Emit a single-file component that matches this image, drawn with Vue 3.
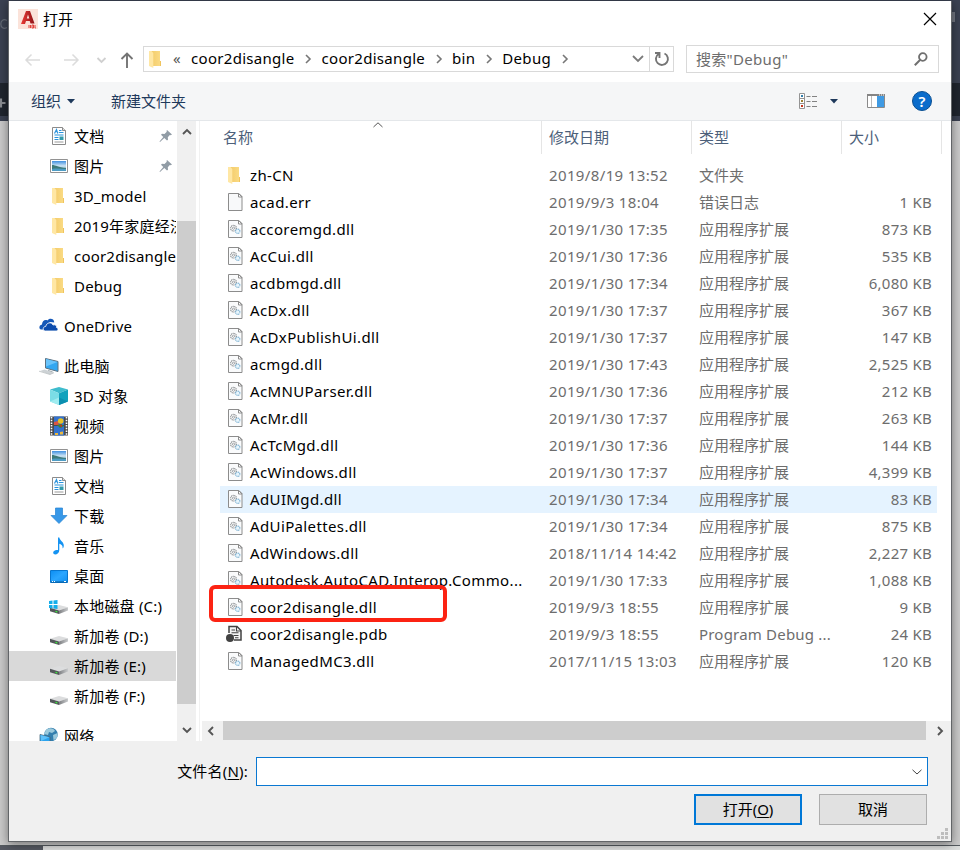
<script setup>
const crumbs = ['coor2disangle', 'coor2disangle', 'bin', 'Debug']

const groups = [
  [
    { icon: 'doc', label: '文档', pin: true },
    { icon: 'pic', label: '图片', pin: true },
    { icon: 'folder', label: '3D_model' },
    { icon: 'folder', label: '2019年家庭经济' },
    { icon: 'folder', label: 'coor2disangle' },
    { icon: 'folder', label: 'Debug' },
  ],
  [{ icon: 'cloud', label: 'OneDrive', root: true }],
  [
    { icon: 'pc', label: '此电脑', root: true },
    { icon: 'cube', label: '3D 对象' },
    { icon: 'video', label: '视频' },
    { icon: 'pic', label: '图片' },
    { icon: 'doc', label: '文档' },
    { icon: 'down', label: '下载' },
    { icon: 'music', label: '音乐' },
    { icon: 'desk', label: '桌面' },
    { icon: 'diskwin', label: '本地磁盘 (C:)' },
    { icon: 'disk', label: '新加卷 (D:)' },
    { icon: 'disk', label: '新加卷 (E:)', active: true },
    { icon: 'disk', label: '新加卷 (F:)' },
  ],
  [{ icon: 'net', label: '网络', root: true }],
]

const DLL = '应用程序扩展'
const files = [
  ['folder', 'zh-CN', '2019/8/19 13:52', '文件夹', ''],
  ['file', 'acad.err', '2019/9/3 18:04', '错误日志', '1 KB'],
  ['dll', 'accoremgd.dll', '2019/1/30 17:35', DLL, '873 KB'],
  ['dll', 'AcCui.dll', '2019/1/30 17:36', DLL, '535 KB'],
  ['dll', 'acdbmgd.dll', '2019/1/30 17:34', DLL, '6,080 KB'],
  ['dll', 'AcDx.dll', '2019/1/30 17:37', DLL, '367 KB'],
  ['dll', 'AcDxPublishUi.dll', '2019/1/30 17:37', DLL, '147 KB'],
  ['dll', 'acmgd.dll', '2019/1/30 17:43', DLL, '2,525 KB'],
  ['dll', 'AcMNUParser.dll', '2019/1/30 17:36', DLL, '212 KB'],
  ['dll', 'AcMr.dll', '2019/1/30 17:37', DLL, '263 KB'],
  ['dll', 'AcTcMgd.dll', '2019/1/30 17:36', DLL, '144 KB'],
  ['dll', 'AcWindows.dll', '2019/1/30 17:37', DLL, '4,399 KB'],
  ['dll', 'AdUIMgd.dll', '2019/1/30 17:34', DLL, '83 KB'],
  ['dll', 'AdUiPalettes.dll', '2019/1/30 17:34', DLL, '875 KB'],
  ['dll', 'AdWindows.dll', '2018/11/14 14:42', DLL, '2,227 KB'],
  ['dll', 'Autodesk.AutoCAD.Interop.Commo...', '2019/1/30 17:33', DLL, '1,088 KB'],
  ['dll', 'coor2disangle.dll', '2019/9/3 18:55', DLL, '9 KB'],
  ['pdb', 'coor2disangle.pdb', '2019/9/3 18:55', 'Program Debug ...', '24 KB'],
  ['dll', 'ManagedMC3.dll', '2017/11/15 13:03', DLL, '120 KB'],
]
const hovered = 'AdUIMgd.dll'
const marked = 'coor2disangle.dll'
</script>

<template>
  <div class="screen">
    <svg class="defs" width="0" height="0" aria-hidden="true">
      <defs>
        <linearGradient id="gFolder" x1="0" x2="1"><stop offset="0" stop-color="#f3cb6a" /><stop offset="1" stop-color="#fbdc86" /></linearGradient>
        <linearGradient id="gSky" x1="0" y1="0" x2="0" y2="1"><stop offset="0" stop-color="#3f8fe0" /><stop offset=".5" stop-color="#cfe6f5" /><stop offset="1" stop-color="#3e7f95" /></linearGradient>
        <linearGradient id="gDesk" x1="0" y1="0" x2="1" y2="1"><stop offset="0" stop-color="#0b8df2" /><stop offset=".5" stop-color="#2ba6ff" /><stop offset="1" stop-color="#118ff0" /></linearGradient>
        <linearGradient id="gDisk" x1="0" x2="1"><stop offset="0" stop-color="#7d7f82" /><stop offset="1" stop-color="#c9cbcd" /></linearGradient>
        <linearGradient id="gA" x1="0" x2="1"><stop offset="0" stop-color="#ea3a35" /><stop offset="1" stop-color="#8d1216" /></linearGradient>
      </defs>
      <symbol id="folder" viewBox="0 0 20 20">
        <path d="M5 2h9v11h1v4H5z" fill="url(#gFolder)" />
        <path d="M3 2h2.500l1.800 2v15L3 17z" fill="#ffe7a4" />
        <path d="M14 12h1v5h-1z" fill="#f0c45e" />
      </symbol>
      <symbol id="doc" viewBox="0 0 20 20">
        <path d="M3.500 1.500h10l3 3v14h-13z" fill="#fff" stroke="#8b8b8b" />
        <path d="M13.500 1.500v3h3" fill="#ddd" stroke="#8b8b8b" />
        <path d="M5.500 7.500l2-4 1.200 4M10 4.500h2.500M9.800 6.500h4.700M5.500 9h9M5.500 11.500h4M5.500 13.500h4" fill="none" stroke="#2b93dc" stroke-width="1.200" />
        <path d="M5.500 16h9" stroke="#999" />
        <path d="M10.500 10.500h4v3.500h-4z" fill="#39a" />
      </symbol>
      <symbol id="pic" viewBox="0 0 20 20">
        <path d="M1.500 3.500h17v13h-17z" fill="#fff" stroke="#929292" />
        <path d="M3 5h14v10H3z" fill="url(#gSky)" />
        <path d="M3 9c4 0 6 2.500 14 3v3H3z" fill="#3d7a7a" />
        <path d="M3 13c5-1 9 0 14 0v2H3z" fill="#4d9cc4" />
      </symbol>
      <symbol id="cloud" viewBox="0 0 20 20">
        <path d="M2 13.500C-.5 13 0 9 3 8.500 3 5 6 3 8.500 4.500 10 2 15 2 15.300 6.500L11 6 7 10v3.500z" fill="#1558b8" />
        <path d="M6.500 15c-3.200-.3-2.900-4.500.3-4.600C7.300 6.500 12.500 5.500 14 9c3-1 4 1.200 3.400 2.400C19.800 12 19.400 15 17 15z" fill="#0c4cad" stroke="#fff" stroke-width=".8" />
      </symbol>
      <symbol id="pc" viewBox="0 0 20 20">
        <path d="M6.500 2.500l12.500 3v10l-12.500-3.500z" fill="#33a7f1" stroke="#5c7181" />
        <path d="M7 3l11.500 3L7 10.500z" fill="#6ac4fb" />
        <path d="M9 14l4.500 1.300v2L9 16z" fill="#9ca4a8" />
        <path d="M1 15l4.500-1.500 9.500 3-4 2z" fill="#cdd2d5" />
        <path d="M0 15.200l11 3.300 4-1.800" fill="none" stroke="#b1b7ba" stroke-width=".7" />
      </symbol>
      <symbol id="cube" viewBox="0 0 20 20">
        <path d="M10 1l9 2.600-9 3.600-9-3.600z" fill="#3fbccd" />
        <path d="M1 3.600l9 3.600V19l-9-3.500z" fill="#7bdde6" />
        <path d="M19 3.600l-9 3.600V19l9-3.500z" fill="#12a2bd" />
        <path d="M1 15.500l9-4V19z" fill="#a0ecf0" /><path d="M10 11.500l9 4L10 19z" fill="#0b8fb0" />
      </symbol>
      <symbol id="video" viewBox="0 0 20 20">
        <path d="M1 .5h18v19H1z" fill="#4b4b4b" />
        <path d="M5 .5h10v8.500H5zM5 10h10v9.500H5z" fill="#3372ce" />
        <path d="M5 6l4-1 1 4H5z" fill="#dc5544" /><circle cx="11.700" cy="5" r="2.800" fill="#eac323" />
        <path d="M8 9l4-1 3 2-4 2z" fill="#30893b" /><path d="M10 9l3-.5v3z" fill="#c7301f" /><path d="M6 17h3v2H6zM11 16l3-.5v3h-3z" fill="#edb93d" />
        <path d="M2.500 1v18M17.500 1v18" stroke="#fff" stroke-width="1.600" stroke-dasharray="1.500 1.200" />
      </symbol>
      <symbol id="down" viewBox="0 0 20 20"><path d="M6.500 2h7v7.500h4.500L10 17.500 2 9.500h4.500z" fill="#3798e8" stroke="#2483d2" stroke-width=".7" /></symbol>
      <symbol id="music" viewBox="0 0 20 20">
        <path d="M9 1.500h1.300c.4 3 4.900 4.500 4.500 8.500-.2 1.500-.7 2-1.300 2.500.7-3-1.500-4-3.200-4.700V14c0 3.200-2.300 4.500-4.300 4.400-3.200-.4-1.700-4.400 1.500-4.400H9z" fill="#1593f2" />
      </symbol>
      <symbol id="desk" viewBox="0 0 20 20">
        <path d="M1.500 4.500h17v12h-17z" fill="url(#gDesk)" stroke="#0876cf" />
        <path d="M2 16h16" stroke="#075f9f" /><path d="M3 15.500h1M5 15.500h1M15 15.500h2" stroke="#fff" />
      </symbol>
      <symbol id="disk" viewBox="0 0 20 20">
        <path d="M1 12.800L10 10l9 2.300-9 3.200z" fill="#dcddde" />
        <path d="M1 12.800l9 2.700V19l-9-2.800z" fill="#53575a" />
        <path d="M10 15.500l9-3.200v3.200L10 19z" fill="url(#gDisk)" />
        <path d="M6.500 16.300l1.800.5" stroke="#3df03d" stroke-width="1.400" />
      </symbol>
      <symbol id="diskwin" viewBox="0 0 20 20">
        <use href="#disk" y="-1" />
        <path d="M0 5l3.500-.5V8H0zM4.500 4.400L8.500 4v4h-4zM0 9h3.500v3.500L0 12zM4.500 9h4v4l-4-.500z" fill="#15aeea" />
      </symbol>
      <symbol id="net" viewBox="0 0 20 20">
        <circle cx="12" cy="8.500" r="6.800" fill="#347fae" />
        <path d="M7 4c3-3 8-2 9 1l-3 2-3-1-1 3-4-1zM14 9l4.500-2c1 4-2 7-4 7z" fill="#9bc9dc" />
        <path d="M1 8.500l10 2.500v8L1 16z" fill="#2ba3ee" stroke="#486578" stroke-width=".8" />
        <path d="M1.500 9l9 2.300L2 15z" fill="#5fc1fa" />
      </symbol>
      <symbol id="file" viewBox="0 0 20 20">
        <path d="M3.500 1.500h10.500l3 3v14H3.500z" fill="#f8f9fa" stroke="#8c8c8c" />
        <path d="M13.500 1.500v3.500H17z" fill="#fff" stroke="#8c8c8c" />
      </symbol>
      <symbol id="dll" viewBox="0 0 20 20">
        <path d="M3.500 1.500h10.500l3 3v14H3.500z" fill="#fafbfc" stroke="#8c8c8c" />
        <path d="M13.500 1.500v3.500H17z" fill="#fff" stroke="#8c8c8c" />
        <circle cx="8.500" cy="9.200" r="2.800" fill="#fff" stroke="#85898c" stroke-width="1.200" stroke-dasharray="1.100 .6" />
        <circle cx="8.500" cy="9.200" r="1.100" fill="none" stroke="#8b9094" stroke-width=".8" />
        <circle cx="12.700" cy="12.200" r="2.200" fill="#e8f5fc" stroke="#7fb2d2" stroke-width="1.100" stroke-dasharray="1.100 .5" />
      </symbol>
      <symbol id="pdb" viewBox="0 0 20 20">
        <path d="M4 9V2.500h8l4 4V16H9" fill="#f4f4f4" stroke="#424242" stroke-width="1.500" />
        <path d="M11.500 2v5H16M6.500 6h3.500M6.500 8.700h7M8.500 11.500h5M10 13.700h3.500" fill="none" stroke="#424242" stroke-width="1.100" />
        <circle cx="5" cy="14" r="4" fill="#424242" />
      </symbol>
      <symbol id="pin" viewBox="0 0 14 14">
        <path d="M8 1l5 4.500-1.400.8-.8-.2-2 2.200.2 2.400-1 .9-2.700-2.700L1 13l-.5-.5L4.300 8 2 5.700 3 4.800l2.500.1L7.800 2.700 7.500 2z" fill="#919ca5" />
      </symbol>
    </svg>

    <div class="backdrop">
      <div class="bd-top">
        <svg width="8" height="12" viewBox="0 0 8 12"><path d="M7 2.500C3.500.5.8 2.500.8 6S3.500 11.500 7 9.500" fill="none" stroke="#656b77" stroke-width="1.200" /></svg>
        <i></i>
      </div>
      <div class="bd-tab"><svg width="8" height="12" viewBox="0 0 8 12"><path d="M0 6h5.500M1 1.500v9" stroke="#8a8d92" stroke-width="2.200" /></svg></div>
      <div class="bd-line"></div>
      <div class="bd-canvas"></div>
      <div class="bd-foot"><i></i><b></b></div>
    </div>

    <section class="dialog">
      <header class="title">
        <svg class="logo" width="20" height="20" viewBox="0 0 20 20">
          <path d="M0 0h20v20H0z" fill="#fbe3da" />
          <path d="M3 15L8 2h4l4.500 12.500h-4l-.8-2.500H8L7 15zM8.800 9.500h2.500L10 5.500z" fill="url(#gA)" fill-rule="evenodd" />
          <path d="M11 16v3M12.500 16v3M14 16h1.500v3H14zM17 16v3h.8" fill="none" stroke="#e0413c" />
        </svg>
        <span>打开</span>
        <svg class="close" width="14" height="14" viewBox="0 0 14 14"><path d="M1 1l12 12M13 1L1 13" stroke="#000" stroke-width="1.200" /></svg>
      </header>

      <nav class="nav">
        <svg class="arrows" width="134" height="28" viewBox="0 0 134 28" fill="none">
          <path d="M31 15H17M22.500 9.500L17 15l5.500 5.500M55 15h14M63.500 9.500L69 15l-5.500 5.500" stroke="#dcdcdc" stroke-width="1.500" />
          <path d="M88.500 13l4 4 4-4" stroke="#d0d0d0" stroke-width="1.800" />
          <path d="M118 23V8.500M112.500 14l5.500-5.500 5.500 5.500" stroke="#747474" stroke-width="1.900" />
        </svg>
        <div class="address">
          <svg width="20" height="20"><use href="#folder" /></svg>
          <span class="laquo">«</span>
          <template v-for="(c, i) in crumbs" :key="i">
            <span class="crumb">{{ c }}</span>
            <svg class="sep" width="7" height="10" viewBox="0 0 7 10"><path d="M1 1l4 4-4 4" fill="none" stroke="#777" stroke-width="1.600" /></svg>
          </template>
          <svg class="drop" width="12" height="8" viewBox="0 0 12 8"><path d="M1 1l5 5 5-5" fill="none" stroke="#7b7b7b" stroke-width="1.800" /></svg>
          <div class="refresh">
            <svg width="16" height="16" viewBox="0 0 16 16" fill="none" stroke="#757575" stroke-width="1.900"><path d="M10.500 2.500a6 6 0 1 1-6 .5M1 2h4.500v5" /></svg>
          </div>
        </div>
        <div class="search">
          <span>搜索"Debug"</span>
          <svg width="14" height="14" viewBox="0 0 14 14" fill="none" stroke="#6f6f6f"><circle cx="8.800" cy="5" r="3.800" stroke-width="1.800" /><path d="M6 8L.8 13.200" stroke-width="2" /></svg>
        </div>
      </nav>

      <div class="toolbar">
        <span class="org">组织</span>
        <svg width="8" height="5" viewBox="0 0 8 5"><path d="M0 0h8L4 4.500z" fill="#1e395b" /></svg>
        <span class="newf">新建文件夹</span>
        <svg class="view" width="19" height="17" viewBox="0 0 19 17" fill="none">
          <path d="M.5.5h5v15h-5zM.5 5.500h5M.5 10.500h5" fill="#fff" stroke="#949494" />
          <path d="M7.500 3.500h4M13 3.500h5M7.500 8.500h4M13 8.500h5M7.500 13.500h4M13 13.500h5" stroke="#828282" />
          <path d="M2 2h2v2H2z" fill="#337fad" /><path d="M2 7h2v2H2z" fill="#9b8334" /><path d="M2 12h2v2H2z" fill="#c5381f" />
        </svg>
        <svg class="tri" width="8" height="5" viewBox="0 0 8 5"><path d="M0 0h8L4 4.500z" fill="#1e395b" /></svg>
        <svg class="pane" width="18" height="14" viewBox="0 0 18 14">
          <path d="M.5.500h17v13H.5z" fill="#fff" stroke="#8a8a8a" /><path d="M0 1h18" stroke="#858585" stroke-width="2" />
          <path d="M4.500 2v11" stroke="#bbb" /><path d="M10 2h7v11h-7z" fill="#3f9ae3" /><path d="M12 1h1M14 1h1M16 1h1" stroke="#fff" />
        </svg>
        <span class="help">?</span>
      </div>

      <div class="main">
        <aside class="tree">
          <div v-for="(g, gi) in groups" :key="gi" class="group">
            <div v-for="n in g" :key="n.label" class="node" :class="{ root: n.root, active: n.active }">
              <svg class="ico" width="20" height="20"><use :href="'#' + n.icon" /></svg>
              <span>{{ n.label }}</span>
              <svg v-if="n.pin" class="pin" width="14" height="14"><use href="#pin" /></svg>
            </div>
          </div>
        </aside>
        <div class="vbar">
          <svg width="10" height="7" viewBox="0 0 10 7"><path d="M1 6l4-4 4 4" /></svg>
          <div class="vthumb"></div>
          <svg width="10" height="7" viewBox="0 0 10 7"><path d="M1 1l4 4 4-4" /></svg>
        </div>
        <div class="files">
          <div class="heads">
            <span class="h-name">名称<svg width="10" height="6" viewBox="0 0 10 6"><path d="M.5 5L5 .800 9.500 5" fill="none" stroke="#555" /></svg></span>
            <span>修改日期</span><span>类型</span><span class="h-size">大小</span>
          </div>
          <div class="rows">
            <div v-for="f in files" :key="f[1]" class="row" :class="{ hover: f[1] === hovered }">
              <svg class="ico" width="20" height="20"><use :href="'#' + f[0]" /></svg>
              <span class="c-name">{{ f[1] }}</span>
              <span class="c-date">{{ f[2] }}</span>
              <span class="c-type" :class="{ latin: f[0] === 'pdb' }">{{ f[3] }}</span>
              <span class="c-size">{{ f[4] }}</span>
              <i v-if="f[1] === marked" class="mark"></i>
            </div>
          </div>
          <div class="hbar">
            <svg width="7" height="10" viewBox="0 0 7 10"><path d="M6 1L2 5l4 4" /></svg>
            <div class="hthumb"></div>
            <svg width="7" height="10" viewBox="0 0 7 10"><path d="M1 1l4 4-4 4" /></svg>
          </div>
        </div>
      </div>

      <footer class="foot">
        <div class="line">
          <label>文件名(<u>N</u>):</label>
          <div class="combo"><svg width="10" height="6" viewBox="0 0 10 6"><path d="M.5.800L5 5 9.500.800" fill="none" stroke="#444" /></svg></div>
        </div>
        <div class="buttons">
          <button class="primary">打开(<u>O</u>)</button>
          <button>取消</button>
        </div>
        <svg class="grip" width="11" height="11" viewBox="0 0 11 11" fill="#bdbdbd">
          <path d="M8 0h3v3H8zM4 4h3v3H4zM8 4h3v3H8zM0 8h3v3H0zM4 8h3v3H4zM8 8h3v3H8z" />
        </svg>
      </footer>
    </section>
  </div>
</template>

<style>
body { overflow: hidden; }
</style>

<style scoped>
.screen {
  position: relative;
  width: 960px;
  height: 850px;
  box-sizing: border-box;
  padding: 1px 8px 0;
  overflow: hidden;
  font-family: "Noto Sans", "Noto Sans CJK SC", sans-serif;
  font-size: 15px;
  color: #000;
}
svg { display: block; flex: none; }
.defs { position: absolute; }
.backdrop { position: absolute; inset: 0; display: flex; flex-direction: column; }
.bd-top { height: 83px; background: #3b4252; display: flex; justify-content: space-between; box-sizing: border-box; padding: 12px 5px 0 0; }
.bd-top svg { margin-top: 6px; }
.bd-top i { width: 5px; height: 10px; background: #737883; }
.bd-tab { height: 33px; background: #20262f; display: flex; align-items: center; padding-top: 7px; box-sizing: border-box; }
.bd-line { height: 5px; background: #3b4252; }
.bd-canvas { flex: 1; background: #cbcbcb; }
.bd-foot { height: 4px; display: flex; border-top: 1px solid #555b60; }
.bd-foot i { width: 43px; background: #555962; }
.bd-foot b { flex: 1; background: #dcdedd; }
.dialog {
  position: relative;
  width: 944px;
  height: 841px;
  box-sizing: border-box;
  border: 1px solid #626568;
  border-top: 0;
  background: #fff;
  box-shadow: 0 2px 10px rgba(0, 0, 0, .45);
  display: flex;
  flex-direction: column;
}
.title { height: 37px; box-sizing: border-box; display: flex; align-items: center; padding: 0 14px 1px 9px; }
.title span { margin-left: 5px; flex: 1; line-height: 30px; padding-bottom: 1px; }
.nav { height: 44px; display: flex; align-items: center; padding-right: 12px; box-sizing: border-box; padding-bottom: 2px; }
.address { width: 531px; height: 26px; box-sizing: border-box; border: 1px solid #d9d9d9; display: flex; align-items: center; padding-left: 2px; }
.address .laquo { margin: 0 9px 2px 7px; color: #555; width: 9px; line-height: 22px; font-size: 15px; }
.crumb { letter-spacing: .3px; line-height: 22px; padding-bottom: 2px; white-space: nowrap; }
.sep { margin: 0 9.500px 0 10.500px; }
.drop { margin-left: auto; margin-right: 5px; }
.refresh { width: 24px; height: 24px; border-left: 1px solid #d9d9d9; display: flex; align-items: center; justify-content: center; box-sizing: border-box; }
.search { margin-left: 12px; flex: 1; height: 28px; box-sizing: border-box; border: 1px solid #d9d9d9; display: flex; align-items: center; justify-content: space-between; padding: 0 10px 0 9px; color: #6d6d6d; }
.search span { letter-spacing: .3px; line-height: 24px; }
.toolbar { height: 39px; box-sizing: border-box; background: #f5f6f7; border-bottom: 1px solid #e4e7ea; display: flex; align-items: center; padding: 0 19px 0 22px; color: #1e395b; }
.org { margin-right: 6px; padding-bottom: 2px; }
.newf { margin-left: 36px; flex: 1; padding-bottom: 2px; }
.tri { margin: 0 29px 0 12px; }
.pane { margin-right: 27px; }
.help { width: 20px; height: 20px; box-sizing: border-box; border: 1px solid #0a4f92; border-radius: 50%; background: #0a6ccb; color: #fff; font-size: 15px; line-height: 18px; text-align: center; font-weight: 600; }
.main { height: 620px; display: flex; }
.tree { width: 168px; height: 620px; overflow: hidden; }
.group + .group { margin-top: 10px; }
.node { height: 30px; width: 167px; box-sizing: border-box; padding-left: 40px; display: flex; align-items: center; white-space: nowrap; overflow: hidden; position: relative; }
.node span { margin-left: 5px; flex: 1; overflow: hidden; line-height: 30px; letter-spacing: .2px; }
.node.root { padding-left: 30px; }
.node.active { background: #d9d9d9; }
.pin { margin-right: 3px; }
.vbar { width: 19px; background: #f0f0f0; display: flex; flex-direction: column; align-items: center; box-sizing: border-box; padding: 7px 0; margin-right: 3px; }
.vbar path, .hbar path { fill: none; stroke: #555; stroke-width: 1.9; }
.vthumb { width: 19px; height: 483px; margin: 86px 0 23px; background: #cdcdcd; }
.files { flex: 1; min-width: 0; display: flex; flex-direction: column; border-left: 1px solid #f1f1f1; }
.heads { height: 33px; display: flex; color: #4c607a; }
.heads span { width: 150px; box-sizing: border-box; border-right: 1px solid #e5e5e5; line-height: 32px; padding-left: 7px; }
.heads .h-name { width: 342px; padding-left: 23px; position: relative; }
.heads .h-size { width: 100px; }
.h-name svg { position: absolute; left: 173px; top: 1px; }
.rows { padding: 8px 14px 0 20px; flex: 1; }
.row { height: 27px; display: flex; align-items: center; position: relative; white-space: nowrap; color: #6d6d6d; line-height: 27px; padding-left: 5px; }
.row .ico { margin-bottom: 2px; }
.row.hover { background: #e5f3ff; }
.c-name { width: 299px; margin-left: 5px; box-sizing: border-box; color: #000; letter-spacing: .37px; }
.c-date { width: 150px; letter-spacing: .37px; }
.c-type { width: 140px; }
.c-type.latin { letter-spacing: .2px; }
.c-size { flex: 1; text-align: right; padding-right: 5px; letter-spacing: .25px; }
.mark { position: absolute; left: -11px; top: -9px; width: 230px; height: 29px; border: 4px solid #fc2313; border-radius: 6px; z-index: 2; }
.hbar { height: 20px; box-sizing: border-box; background: #f0f0f0; display: flex; align-items: center; margin-left: 2px; padding: 0 6px 1px 5px; }
.hthumb { width: 703px; height: 19px; margin: 0 11px 0 9px; background: #cdcdcd; }
.foot { flex: 1; background: #f0f0f0; position: relative; padding: 16px 23px 0 0; }
.line { display: flex; align-items: center; justify-content: flex-end; }
.line label { margin-right: 8px; padding-bottom: 2px; letter-spacing: .2px; }
.combo { width: 672px; height: 29px; box-sizing: border-box; border: 1px solid #0a78d2; background: #fff; display: flex; align-items: center; justify-content: flex-end; padding-right: 5px; }
.buttons { display: flex; justify-content: flex-end; gap: 17px; margin-top: 8px; padding-right: 1px; }
button { width: 108px; height: 31px; box-sizing: border-box; border: 1px solid #adadad; background: #e1e1e1; font: inherit; color: #000; padding: 0 0 2px; }
button.primary { border: 2px solid #0078d7; }
u { text-underline-offset: 2px; text-decoration-thickness: 1px; }
.grip { position: absolute; right: 3px; bottom: 2px; }
</style>
